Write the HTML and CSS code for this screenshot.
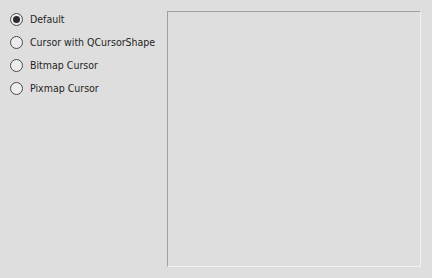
FILE: index.html
```html
<!DOCTYPE html>
<html>
<head>
<meta charset="utf-8">
<link rel="stylesheet" href="styles.css">
</head>
<body>
<div class="win">
  <div class="opts">
    <label class="opt"><span class="radio on"><span class="dot"></span></span><span class="txt">Default</span></label>
    <label class="opt"><span class="radio"></span><span class="txt">Cursor with QCursorShape</span></label>
    <label class="opt"><span class="radio"></span><span class="txt">Bitmap Cursor</span></label>
    <label class="opt"><span class="radio"></span><span class="txt">Pixmap Cursor</span></label>
  </div>
  <div class="frame"></div>
</div>
</body>
</html>
```
FILE: styles.css
```css
html, body { margin: 0; padding: 0; }
body { background: #dedede; width: 432px; height: 278px; overflow: hidden; }
.win { display: flex; padding: 11px 11px 11px 10px; height: 278px; box-sizing: border-box; }
.opts { width: 157px; display: flex; flex-direction: column; gap: 9px; padding-top: 1px; }
.opt { display: flex; align-items: center; height: 14px; font-family: "DejaVu Sans Condensed", "DejaVu Sans", sans-serif; font-stretch: condensed; font-size: 10.5px; color: #1e1e1e; }
.radio { width: 11px; height: 11px; border: 1px solid #4a4a4a; border-radius: 50%; background: #ececec; box-sizing: content-box; display: flex; align-items: center; justify-content: center; margin-right: 7px; }
.dot { width: 7px; height: 7px; border-radius: 50%; background: #2a2a2a; }
.frame { flex: 1; border-top: 1px solid #a0a0a0; border-left: 1px solid #a0a0a0; border-right: 1px solid #f2f2f2; border-bottom: 1px solid #f2f2f2; }
```
